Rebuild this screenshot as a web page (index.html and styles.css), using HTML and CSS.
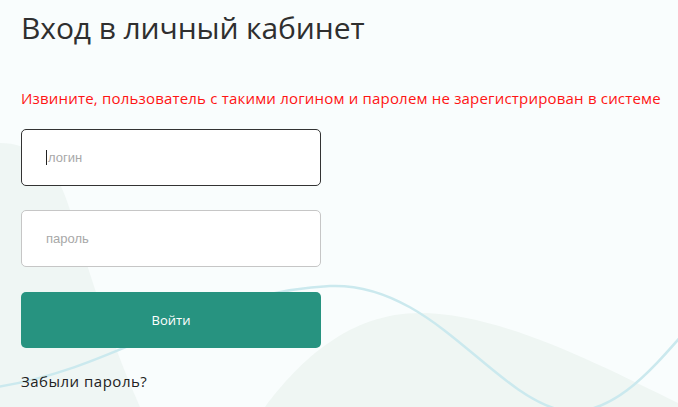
FILE: index.html
```html
<!DOCTYPE html>
<html lang="ru">
<head>
<meta charset="utf-8">
<title>Вход в личный кабинет</title>
<link rel="stylesheet" href="styles.css">
</head>
<body>
<svg class="bg" width="678" height="407" viewBox="0 0 678 407" aria-hidden="true">
  <path d="M0,143 C30,143 55,160 70,210 C85,260 110,340 140,407 L0,407 Z" fill="#eff6f4"/>
  <path d="M265,407 C300,360 350,313 420,313 C500,313 600,365 678,403 L678,407 Z" fill="#eff6f3"/>
  <path d="M-10,388 C120,370 200,292 330,286 C430,282 490,392 560,410 C610,420 650,372 690,326" fill="none" stroke="#cbe9ee" stroke-width="2.5"/>
</svg>
<main class="page">
  <h1 class="title">Вход в личный кабинет</h1>
  <p class="error">Извините, пользователь с такими логином и паролем не зарегистрирован в системе</p>
  <form class="form">
    <div class="field field--active"><span class="caret"></span><span class="placeholder">логин</span></div>
    <div class="field"><span class="placeholder">пароль</span></div>
    <button class="submit" type="button">Войти</button>
  </form>
  <a class="forgot" href="#">Забыли пароль?</a>
</main>
</body>
</html>
```
FILE: styles.css
```css
html, body {
  margin: 0;
  padding: 0;
}
body {
  width: 678px;
  height: 407px;
  overflow: hidden;
  background: #f9fdfd;
  font-family: "Open Sans", "Liberation Sans", sans-serif;
  position: relative;
}
.bg {
  position: absolute;
  left: 0;
  top: 0;
  z-index: 0;
}
.page {
  position: relative;
  z-index: 1;
  padding: 8px 0 0 21px;
  display: flex;
  flex-direction: column;
  align-items: flex-start;
}
.title {
  margin: 0;
  font-family: "Open Sans", sans-serif;
  font-weight: 400;
  font-size: 30px;
  line-height: 40px;
  color: #2f2f2f;
  letter-spacing: -0.1px;
}
.error {
  margin: 40px 0 0;
  font-size: 15px;
  line-height: 20px;
  color: #ff1414;
  letter-spacing: 0.19px;
}
.form {
  margin-top: 21px;
  display: flex;
  flex-direction: column;
  gap: 24px;
}
.field {
  box-sizing: border-box;
  width: 300px;
  height: 57px;
  border: 1px solid #c6c6c6;
  border-radius: 5px;
  background: #fff;
  display: flex;
  align-items: center;
  padding-left: 24px;
  font-family: "Liberation Sans", Arial, sans-serif;
  font-size: 13px;
}
.field--active {
  border-color: #333;
}
.caret {
  width: 1px;
  height: 15px;
  background: #222;
  margin-right: 1px;
}
.placeholder {
  color: #a8a8a8;
}
.submit {
  width: 300px;
  height: 56px;
  border: 0;
  border-radius: 5px;
  background: #279380;
  color: #fff;
  font-family: "Open Sans", sans-serif;
  font-size: 13px;
  padding: 0;
  margin-top: 1px;
}
.forgot {
  margin-top: 23px;
  font-size: 15px;
  line-height: 20px;
  color: #222;
  text-decoration: none;
  letter-spacing: 0.5px;
}
```
